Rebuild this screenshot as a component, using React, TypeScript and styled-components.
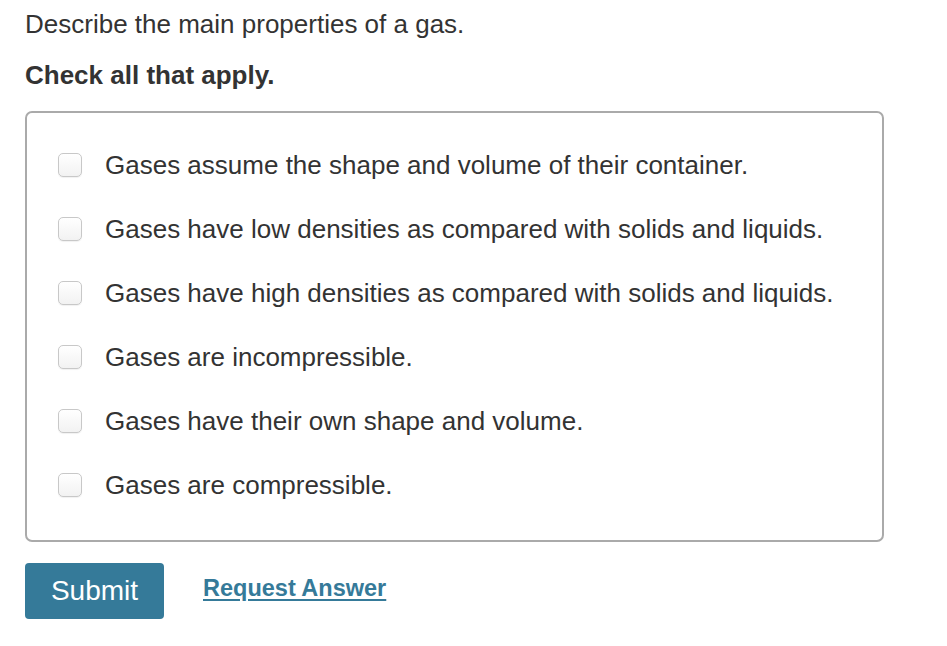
import React from 'react';
import styled, { createGlobalStyle } from 'styled-components';

const options = [
  'Gases assume the shape and volume of their container.',
  'Gases have low densities as compared with solids and liquids.',
  'Gases have high densities as compared with solids and liquids.',
  'Gases are incompressible.',
  'Gases have their own shape and volume.',
  'Gases are compressible.',
];

const App: React.FC = () => {
  return (
    <Page>
      <GlobalStyle />
      <Prompt>Describe the main properties of a gas.</Prompt>
      <Instruction>Check all that apply.</Instruction>
      <OptionsBox>
        {options.map(text => (
          <OptionRow key={text}>
            <Checkbox type="checkbox" />
            <OptionText>{text}</OptionText>
          </OptionRow>
        ))}
      </OptionsBox>
      <Actions>
        <SubmitButton type="button">Submit</SubmitButton>
        <RequestLink href="#">Request Answer</RequestLink>
      </Actions>
    </Page>
  );
};

export default App;

// Styled

const GlobalStyle = createGlobalStyle`
  body {
    margin: 0;
    background: #fff;
    font-family: "Liberation Sans", Arial, sans-serif;
    color: #333;
  }
`;

const Page = styled.div`
  padding: 8px 25px 0;
  width: 859px;
`;

const Prompt = styled.p`
  margin: 0;
  font-size: 26px;
  line-height: 32px;
`;

const Instruction = styled.p`
  margin: 19px 0 0;
  font-size: 26px;
  line-height: 32px;
  font-weight: bold;
`;

const OptionsBox = styled.div`
  margin-top: 20px;
  border: 2px solid #aaa;
  border-radius: 7px;
  padding: 32px 0 35px 31px;
  display: flex;
  flex-direction: column;
  gap: 24px;
`;

const OptionRow = styled.label`
  display: flex;
  align-items: center;
  height: 40px;
`;

const Checkbox = styled.input`
  appearance: none;
  margin: 0;
  width: 24px;
  height: 24px;
  border: 1px solid #c8c8c8;
  border-radius: 5px;
  background: linear-gradient(#fff, #f2f2f2);
  box-shadow: 0 1px 1px rgba(0, 0, 0, 0.06);
`;

const OptionText = styled.span`
  margin-left: 23px;
  font-size: 26px;
`;

const Actions = styled.div`
  display: flex;
  align-items: center;
  margin-top: 21px;
  gap: 39px;
`;

const SubmitButton = styled.button`
  width: 139px;
  height: 56px;
  border: none;
  border-radius: 4px;
  background: #357a99;
  color: #fff;
  font-family: "Liberation Sans", Arial, sans-serif;
  font-size: 28px;
`;

const RequestLink = styled.a`
  margin-bottom: 5px;
  color: #357a99;
  font-size: 23.5px;
  font-weight: bold;
  text-decoration: underline;
  text-underline-offset: 3px;
`;
